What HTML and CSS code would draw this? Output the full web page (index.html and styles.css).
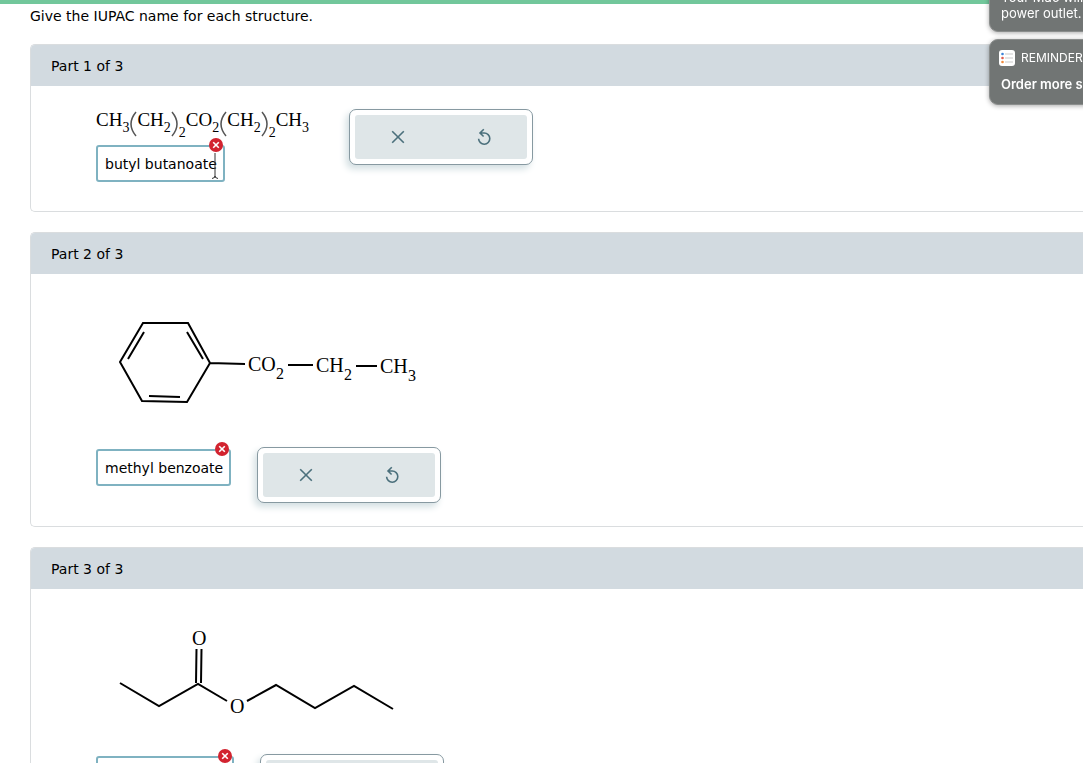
FILE: index.html
```html
<!DOCTYPE html>
<html lang="en">
<head>
<meta charset="utf-8">
<title>IUPAC names</title>
<link rel="stylesheet" href="styles.css">
</head>
<body>
<svg class="defs" aria-hidden="true">
  <symbol id="clear" viewBox="0 0 14 14"><path d="M1.200 1.200 12.800 12.800M12.800 1.200 1.200 12.800"/></symbol>
  <symbol id="undo" viewBox="0 0 16 18"><path d="M4 5H8.200A5.600 5.600 0 1 1 2.600 10.800M7.800 1.300 4 5 7.600 8.500"/></symbol>
  <symbol id="wrong" viewBox="0 0 14 14"><circle cx="7" cy="7" r="7" fill="#d2232f"/><path d="M4.200 4.200 9.800 9.800M9.800 4.200 4.200 9.800" stroke="#fff" stroke-width="1.600"/></symbol>
  <symbol id="open" viewBox="0 0 8 26"><path d="M7 1Q-3 13 7 25"/></symbol>
  <symbol id="close" viewBox="0 0 8 26"><path d="M1 1Q11 13 1 25"/></symbol>
</svg>
<main class="page">
  <h1 class="prompt">Give the IUPAC name for each structure.</h1>

  <section class="card">
    <h2 class="card-title">Part 1 of 3</h2>
    <div class="card-body body-one">
      <div class="question">
        <div class="formula">CH<sub>3</sub><svg class="paren"><use href="#open"/></svg>CH<sub>2</sub><svg class="paren"><use href="#close"/></svg><sub class="low">2</sub>CO<sub>2</sub><svg class="paren"><use href="#open"/></svg>CH<sub>2</sub><svg class="paren"><use href="#close"/></svg><sub class="low">2</sub>CH<sub>3</sub></div>
        <div class="answer answer-one">
          <input class="field" type="text" aria-label="Answer for part 1" value="butyl butanoate">
          <svg class="wrong"><use href="#wrong"/></svg>
          <svg class="cursor" viewBox="0 0 8 26"><path d="M4 0V25M1 25.500Q4 25 4 23Q4 25 7 25.500"/></svg>
        </div>
      </div>
      <div class="tools">
        <div class="tools-inner">
          <button class="tool" type="button" aria-label="Clear"><svg class="icon-clear"><use href="#clear"/></svg></button>
          <button class="tool" type="button" aria-label="Undo"><svg class="icon-undo"><use href="#undo"/></svg></button>
        </div>
      </div>
    </div>
  </section>

  <section class="card">
    <h2 class="card-title">Part 2 of 3</h2>
    <div class="card-body body-two">
      <svg class="molecule" width="330" height="100" viewBox="0 0 330 100" role="img" aria-label="Ester attached to a benzene ring">
        <path class="bond" d="M47 9H92L114 49L91 88L46 87L24 48ZM48 18 32 45M91 18 107 45M53 82 84 83M114 49 149 50M192 51H217M260 52H281"/>
        <text x="152" y="57">CO</text><text class="index" x="180" y="65">2</text>
        <text x="220" y="58">CH</text><text class="index" x="248" y="66">2</text>
        <text x="284" y="59">CH</text><text class="index" x="312" y="67">3</text>
      </svg>
      <div class="row">
        <div class="answer answer-two">
          <input class="field" type="text" aria-label="Answer for part 2" value="methyl benzoate">
          <svg class="wrong"><use href="#wrong"/></svg>
        </div>
        <div class="tools">
          <div class="tools-inner">
            <button class="tool" type="button" aria-label="Clear"><svg class="icon-clear"><use href="#clear"/></svg></button>
            <button class="tool" type="button" aria-label="Undo"><svg class="icon-undo"><use href="#undo"/></svg></button>
          </div>
        </div>
      </div>
    </div>
  </section>

  <section class="card">
    <h2 class="card-title">Part 3 of 3</h2>
    <div class="card-body body-three">
      <svg class="molecule" width="310" height="100" viewBox="0 0 310 100" role="img" aria-label="Skeletal structure of an ester">
        <path class="bond" d="M24 58 63 81 102 59 131 76M151 76 180 60 219 83 258 61 297 84M100 58 100.500 24M105 58 105.500 24"/>
        <text x="96" y="20">O</text><text x="134" y="88">O</text>
      </svg>
      <div class="row">
        <div class="answer answer-three">
          <input class="field" type="text" aria-label="Answer for part 3">
          <svg class="wrong"><use href="#wrong"/></svg>
        </div>
        <div class="tools">
          <div class="tools-inner">
            <button class="tool" type="button" aria-label="Clear"><svg class="icon-clear"><use href="#clear"/></svg></button>
            <button class="tool" type="button" aria-label="Undo"><svg class="icon-undo"><use href="#undo"/></svg></button>
          </div>
        </div>
      </div>
    </div>
  </section>
</main>
<aside class="notices">
  <div class="notice">
    <p class="notice-text">Your Mac will<br>power outlet.</p>
  </div>
  <div class="notice">
    <p class="notice-app"><svg class="app-icon" viewBox="0 0 16 16"><rect width="16" height="16" rx="3" fill="#fff"/><circle cx="3.500" cy="4" r="1.300" fill="#3c83d8"/><circle cx="3.500" cy="8" r="1.300" fill="#e05b4d"/><circle cx="3.500" cy="12" r="1.300" fill="#f08a3c"/><path d="M6 4H14M6 8H14M6 12H14" stroke="#c9c9c9"/></svg>REMINDERS</p>
    <p class="notice-title">Order more s</p>
  </div>
</aside>
</body>
</html>
```
FILE: styles.css
```css
* { box-sizing: border-box; }

body {
  margin: 0;
  height: 100vh;
  overflow: hidden;
  border-top: 4px solid #72c79b;
  background: #fff;
  color: #000;
  font: 14px/20px "DejaVu Sans", Verdana, sans-serif;
}

h1, h2, p { margin: 0; font: inherit; }

.defs { position: absolute; width: 0; height: 0; }

.page {
  display: flex;
  flex-direction: column;
  gap: 20px;
  padding: 2px 0 0 30px;
}

.prompt { margin-bottom: -2px; }

.card {
  border: 1px solid #dadddf;
  border-right: 0;
  border-radius: 5px 0 0 5px;
}

.card-title {
  padding: 11px 20px 10px;
  border-radius: 4px 0 0 0;
  background: #d2dae0;
}

.card-body { padding: 40px 0 23px 65px; }

.body-one {
  display: flex;
  align-items: flex-start;
  gap: 36px;
  padding-top: 23px;
  padding-bottom: 29px;
}

.body-three { padding-top: 36px; }

.question { min-width: 217px; }

.formula {
  height: 36px;
  white-space: nowrap;
  font: 19px/22px "Liberation Serif", "Times New Roman", serif;
}

.formula sub {
  position: relative;
  top: 6px;
  vertical-align: baseline;
  font-size: 14px;
  line-height: 0;
}

.formula .low { top: 11px; }

.paren {
  width: 8px;
  height: 26px;
  margin: -3px 0;
  vertical-align: -8px;
  fill: none;
  stroke: #555;
  stroke-width: 1.5;
}

.row {
  display: flex;
  align-items: flex-start;
  gap: 26px;
  margin-top: 33px;
}

.body-three .row { margin-top: 29px; }

.answer { position: relative; height: 37px; }

.row .answer { margin-top: 2px; }

.answer-one { width: 129px; }
.answer-two { width: 135px; }
.answer-three { width: 138px; }

.field {
  width: 100%;
  height: 37px;
  padding: 0 0 0 7px;
  border: 2px solid #7fb2c1;
  border-radius: 3px;
  outline: 0;
  background: #fff;
  color: #000;
  font: inherit;
}

.wrong {
  position: absolute;
  top: -7px;
  right: 2px;
  width: 14px;
  height: 14px;
}

.cursor {
  position: absolute;
  top: 8px;
  right: 6px;
  width: 8px;
  height: 26px;
  fill: none;
  stroke: #333;
}

.tools {
  width: 184px;
  padding: 5px;
  border: 1px solid #8799a1;
  border-radius: 7px;
  background: #fff;
  box-shadow: -3px 4px 7px #d3dfe2;
}

.tools-inner {
  display: grid;
  grid-template-columns: 1fr 1fr;
  height: 44px;
  border-radius: 3px;
  background: #dfe6e8;
}

.tool {
  display: grid;
  place-items: center;
  padding: 0;
  border: 0;
  background: none;
  color: #4b707c;
}

.tool svg { fill: none; stroke: currentColor; stroke-width: 1.6; }

.icon-clear { width: 14px; height: 14px; }
.icon-undo { width: 16px; height: 18px; }

.molecule { display: block; }

.molecule text { font: 20px "Liberation Serif", "Times New Roman", serif; }

.molecule .index { font-size: 16px; }

.bond { fill: none; stroke: #000; stroke-width: 2; }

.notices {
  position: fixed;
  top: -34px;
  right: -246px;
  display: flex;
  flex-direction: column;
  gap: 7px;
  width: 340px;
  color: #fff;
  font: 13px/16px Inter, sans-serif;
}

.notice {
  height: 66px;
  padding: 10px 11px;
  border: 1px solid #8a8d8c;
  border-radius: 9px;
  background: #717574;
  box-shadow: 0 1px 5px #0005;
}

.notice-text { padding-top: 12px; }

.notice-app { display: flex; gap: 6px; margin-left: -2px; font-size: 12px; }

.app-icon { width: 16px; height: 16px; }

.notice-title { padding-top: 10px; font-weight: 600; }
```
